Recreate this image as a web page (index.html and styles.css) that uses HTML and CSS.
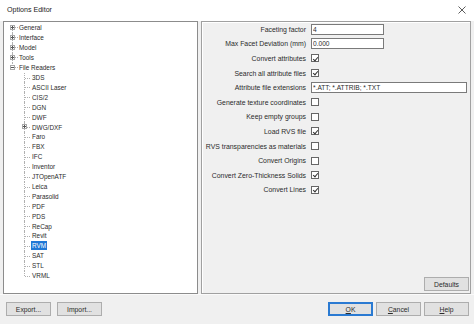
FILE: index.html
```html
<!DOCTYPE html>
<html lang="en">

<head>
    <meta charset="UTF-8">
    <title>Options Editor</title>
    <link rel="stylesheet" href="styles.css">
</head>

<body>
    <div class="titlebar">
        <span class="title">Options Editor</span>
        <svg class="close" width="8" height="8" viewBox="0 0 8 8">
            <path d="M0.5 0.5 L7.5 7.5 M7.5 0.5 L0.5 7.5" stroke="#333" stroke-width="0.8" fill="none" />
        </svg>
    </div>

    <div class="main">
        <div class="tree">
            <div class="node top first">
                <span class="exp plus"></span><span class="link"></span><span class="lbl">General</span>
            </div>
            <div class="node top">
                <span class="exp plus"></span><span class="link"></span><span class="lbl">Interface</span>
            </div>
            <div class="node top">
                <span class="exp plus"></span><span class="link"></span><span class="lbl">Model</span>
            </div>
            <div class="node top">
                <span class="exp plus"></span><span class="link"></span><span class="lbl">Tools</span>
            </div>
            <div class="node top last">
                <span class="exp"></span><span class="link"></span><span class="lbl">File Readers</span>
            </div>
            <div class="kids">
                <div class="kid"><span class="lbl">3DS</span></div>
                <div class="kid"><span class="lbl">ASCII Laser</span></div>
                <div class="kid"><span class="lbl">CIS/2</span></div>
                <div class="kid"><span class="lbl">DGN</span></div>
                <div class="kid"><span class="lbl">DWF</span></div>
                <div class="kid has-exp"><span class="exp plus"></span><span class="lbl">DWG/DXF</span></div>
                <div class="kid"><span class="lbl">Faro</span></div>
                <div class="kid"><span class="lbl">FBX</span></div>
                <div class="kid"><span class="lbl">IFC</span></div>
                <div class="kid"><span class="lbl">Inventor</span></div>
                <div class="kid"><span class="lbl">JTOpenATF</span></div>
                <div class="kid"><span class="lbl">Leica</span></div>
                <div class="kid"><span class="lbl">Parasolid</span></div>
                <div class="kid"><span class="lbl">PDF</span></div>
                <div class="kid"><span class="lbl">PDS</span></div>
                <div class="kid"><span class="lbl">ReCap</span></div>
                <div class="kid"><span class="lbl">Revit</span></div>
                <div class="kid"><span class="lbl selected">RVM</span></div>
                <div class="kid"><span class="lbl">SAT</span></div>
                <div class="kid"><span class="lbl">STL</span></div>
                <div class="kid"><span class="lbl">VRML</span></div>
            </div>
        </div>

        <div class="props">
            <div class="grid">
                <label>Faceting factor</label>
                <div><input class="field" type="text" value="4"></div>

                <label>Max Facet Deviation (mm)</label>
                <div><input class="field" type="text" value="0.000"></div>

                <label>Convert attributes</label>
                <div><span class="check on"></span></div>

                <label>Search all attribute files</label>
                <div><span class="check on"></span></div>

                <label>Attribute file extensions</label>
                <div><input class="field wide" type="text" value="*.ATT; *.ATTRIB; *.TXT"></div>

                <label>Generate texture coordinates</label>
                <div><span class="check"></span></div>

                <label>Keep empty groups</label>
                <div><span class="check"></span></div>

                <label>Load RVS file</label>
                <div><span class="check on"></span></div>

                <label>RVS transparencies as materials</label>
                <div><span class="check"></span></div>

                <label>Convert Origins</label>
                <div><span class="check"></span></div>

                <label>Convert Zero-Thickness Solids</label>
                <div><span class="check on"></span></div>

                <label>Convert Lines</label>
                <div><span class="check on"></span></div>
            </div>
            <div class="props-foot">
                <button class="btn">Defaults</button>
            </div>
        </div>
    </div>

    <div class="footer">
        <div class="left">
            <button class="btn">Export...</button>
            <button class="btn">Import...</button>
        </div>
        <div class="right">
            <button class="btn default"><u>O</u>K</button>
            <button class="btn"><u>C</u>ancel</button>
            <button class="btn"><u>H</u>elp</button>
        </div>
    </div>
</body>

</html>
```

FILE: styles.css
```css
* {
    margin: 0;
    padding: 0;
    box-sizing: border-box;
}

body {
    width: 474px;
    height: 324px;
    overflow: hidden;
    background: #f0f0f0;
    font-family: "Liberation Sans", Arial, sans-serif;
    color: #2b2b2b;
}

.titlebar {
    height: 21px;
    background: #fff;
    display: flex;
    align-items: center;
    justify-content: space-between;
    padding: 0 8px 1px 7px;
}

.title {
    font-size: 7.1px;
    color: #222;
}

.close {
    display: block;
}

.main {
    display: flex;
    height: 273px;
    padding: 0 3px 0 3px;
    gap: 3px;
}

/* tree */

.tree {
    width: 195px;
    background: #fff;
    border: 1px solid #8c8c8c;
    padding-top: 1px;
    font-size: 6.4px;
}

.node,
.kid {
    position: relative;
    display: flex;
    align-items: center;
    height: 9.92px;
}

.top {
    padding-left: 6px;
}

.top::before {
    content: "";
    position: absolute;
    left: 8px;
    top: 0;
    bottom: 0;
    border-left: 1px dotted #b0b0b0;
}

.top.first::before {
    top: 5px;
}

.top.last::before {
    bottom: 5px;
}

.exp {
    position: relative;
    z-index: 1;
    width: 5px;
    height: 5px;
    border: 1px solid #a8a8a8;
    background: #fff;
    flex: none;
}

.exp::before {
    content: "";
    position: absolute;
    left: 0;
    top: 1px;
    width: 3px;
    height: 1px;
    background: #555;
}

.exp.plus::after {
    content: "";
    position: absolute;
    left: 1px;
    top: 0;
    width: 1px;
    height: 3px;
    background: #555;
}

.link {
    width: 3px;
    border-top: 1px dotted #b0b0b0;
    flex: none;
}

.lbl {
    padding: 0 1px;
    line-height: 9px;
    white-space: nowrap;
}

.lbl.selected {
    background: #1f78d6;
    color: #fff;
}

.kids {
    margin-left: 20px;
}

.kid {
    padding-left: 7px;
}

.kid::before {
    content: "";
    position: absolute;
    left: 0;
    top: 0;
    bottom: 0;
    border-left: 1px dotted #b0b0b0;
}

.kid:last-child::before {
    bottom: 5px;
}

.kid::after {
    content: "";
    position: absolute;
    left: 1px;
    top: 5px;
    width: 5px;
    border-top: 1px dotted #b0b0b0;
}

.kid.has-exp .exp {
    position: absolute;
    left: -2px;
    top: 2px;
}

/* properties */

.props {
    flex: 1;
    display: flex;
    flex-direction: column;
    justify-content: space-between;
    border: 1px solid #a0a0a0;
    box-shadow: inset 1px 1px 0 #fff;
    padding: 0 1px 2px 0;
}

.grid {
    display: grid;
    grid-template-columns: 104px 1fr;
    grid-auto-rows: 14.6px;
    column-gap: 5px;
    font-size: 6.9px;
}

.grid label {
    text-align: right;
    white-space: nowrap;
    align-self: center;
}

.grid > div {
    display: flex;
    align-items: center;
}

.field {
    width: 73px;
    height: 11px;
    border: 1px solid #7a7a7a;
    background: #fff;
    font-family: inherit;
    font-size: 6.6px;
    color: #2b2b2b;
    padding: 0 1px;
    outline: none;
}

.field.wide {
    width: 156px;
}

.check {
    width: 8px;
    height: 8px;
    border: 1px solid #666;
    background: #fff;
    position: relative;
}

.check.on::after {
    content: "";
    position: absolute;
    left: 1.8px;
    top: 0.2px;
    width: 2px;
    height: 4px;
    border-right: 1px solid #333;
    border-bottom: 1px solid #333;
    transform: rotate(40deg);
}

.props-foot {
    display: flex;
    justify-content: flex-end;
}

/* buttons */

.btn {
    width: 45px;
    height: 14px;
    background: #e1e1e1;
    border: 1px solid #adadad;
    font-family: inherit;
    font-size: 6.8px;
    color: #2b2b2b;
}

.btn.default {
    border-color: #2a7ad2;
    box-shadow: inset 0 0 0 1px #2a7ad2;
}

.footer {
    display: flex;
    justify-content: space-between;
    padding: 7px 5px 0 6px;
    border-top: 1px solid #fafafa;
}

.footer .left {
    display: flex;
    gap: 6px;
}

.footer .right {
    display: flex;
    gap: 3px;
}
```
